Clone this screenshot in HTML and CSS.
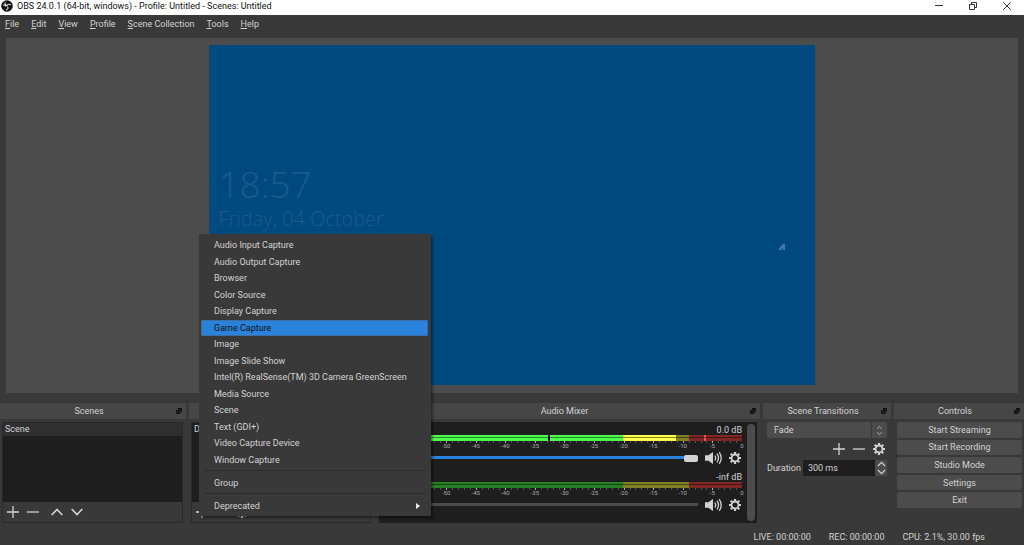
FILE: index.html
```
<!DOCTYPE html>
<html lang="en">
<head>
<meta charset="utf-8">
<title>OBS 24.0.1 (64-bit, windows)</title>
<link rel="stylesheet" href="styles.css">
</head>
<body>
<svg class="defs" aria-hidden="true">
  <symbol id="plus" viewBox="0 0 12 12"><path d="M6 0v12M0 6h12" stroke="currentColor" stroke-width="1.3"/></symbol>
  <symbol id="minus" viewBox="0 0 12 12"><path d="M0 6h12" stroke="currentColor" stroke-width="1.3"/></symbol>
  <symbol id="up" viewBox="0 0 12 12"><path d="M.7 9 6 3.4 11.3 9" fill="none" stroke="currentColor" stroke-width="1.7"/></symbol>
  <symbol id="down" viewBox="0 0 12 12"><path d="M.7 3 6 8.6 11.3 3" fill="none" stroke="currentColor" stroke-width="1.7"/></symbol>
  <symbol id="gear" viewBox="0 0 12 12"><circle cx="6" cy="6" r="3.5" fill="none" stroke="currentColor" stroke-width="1.8"/><path d="M6 0v2M6 10v2M0 6h2M10 6h2M1.75 1.75l1.4 1.4M8.85 8.85l1.4 1.4M1.75 10.25l1.4-1.4M8.85 3.15l1.4-1.4" stroke="currentColor" stroke-width="2.2"/></symbol>
  <symbol id="speaker" viewBox="0 0 17 12"><path d="M0 3.2h3.4L8 0v12L3.4 8.8H0z" fill="currentColor"/><path d="M9.8 3.6q1.8 2.4 0 4.8M12 1.6q3 4.4 0 8.8M14.2 .2q4 5.8 0 11.6" fill="none" stroke="currentColor" stroke-width="1.3"/></symbol>
  <symbol id="float" viewBox="0 0 6 6"><path d="M2 0h4v4H5V2H2z" fill="#111"/><path d="M.5 2.5h3.6v3H.5z" fill="#222" stroke="#111"/></symbol>
</svg>
<div class="window">
  <header class="titlebar">
    <svg class="logo" viewBox="0 0 12 12"><circle cx="6" cy="6" r="5.8" fill="#111"/><path d="M4.2 2.4c-.6 1.9.5 3 2 3M9.8 5c-1.5-1.3-3-.8-3.6.6M5.1 9.9c1.9-.2 2.4-2 1.3-3.4M2 5.2c1.6-.5 2.6.3 2.8 1.4" fill="none" stroke="#ddd" stroke-width="1.1"/></svg>
    <h1 class="title">OBS 24.0.1 (64-bit, windows) - Profile: Untitled - Scenes: Untitled</h1>
    <div class="winbuttons">
      <button aria-label="Minimize"><svg viewBox="0 0 8 8"><path d="M0 3.5h8" stroke="#333"/></svg></button>
      <button aria-label="Restore"><svg viewBox="0 0 8 8"><path d="M.5 2.5h5v5h-5zM2.5 2V.5h5v5H6" fill="none" stroke="#333"/></svg></button>
      <button aria-label="Close"><svg viewBox="0 0 8 8"><path d="M.3.3l7.4 7.4M7.7.3.3 7.7" stroke="#333"/></svg></button>
    </div>
  </header>
  <nav class="menubar">
    <button><u>F</u>ile</button><button><u>E</u>dit</button><button><u>V</u>iew</button><button><u>P</u>rofile</button><button><u>S</u>cene Collection</button><button><u>T</u>ools</button><button><u>H</u>elp</button>
  </nav>
  <main class="preview">
    <div class="canvas">
      <div class="lock"><div class="clock">18:57</div><div class="date">Friday, 04 October</div></div>
      <svg class="cursor" viewBox="0 0 6 6"><path d="M3 0h3v6H4V4H3v2H0V4h1V2h2z" fill="#3f78a6"/></svg>
    </div>
  </main>
  <div class="docks">
    <section class="dock">
      <h2 class="docktitle">Scenes<svg class="float"><use href="#float"/></svg></h2>
      <div class="listbox">
        <ul class="list"><li class="row selected">Scene</li></ul>
        <div class="toolbar">
          <button aria-label="Add scene"><svg><use href="#plus"/></svg></button>
          <button aria-label="Remove scene"><svg><use href="#minus"/></svg></button>
          <span class="divider"></span>
          <button aria-label="Move scene up"><svg><use href="#up"/></svg></button>
          <button aria-label="Move scene down"><svg><use href="#down"/></svg></button>
        </div>
      </div>
    </section>
    <section class="dock">
      <h2 class="docktitle"><svg class="float"><use href="#float"/></svg></h2>
      <div class="listbox">
        <ul class="list"><li class="row">D</li></ul>
        <div class="toolbar">
          <button aria-label="Add source"><svg><use href="#plus"/></svg></button>
          <button aria-label="Remove source"><svg><use href="#minus"/></svg></button>
          <button aria-label="Source properties"><svg><use href="#gear"/></svg></button>
        </div>
      </div>
    </section>
    <section class="dock">
      <h2 class="docktitle">Audio Mixer<svg class="float"><use href="#float"/></svg></h2>
      <div class="mixer">
        <div class="channels">
          <div class="channel">
            <div class="level">0.0 dB</div>
            <div class="meter live"></div>
            <div class="ticks"></div>
            <div class="scale"><span>-60</span><span>-55</span><span>-50</span><span>-45</span><span>-40</span><span>-35</span><span>-30</span><span>-25</span><span>-20</span><span>-15</span><span>-10</span><span>-5</span><span>0</span></div>
            <div class="volume">
              <input class="fader" type="range" min="0" max="100" value="100" aria-label="Desktop audio volume">
              <button aria-label="Mute desktop audio"><svg class="speaker"><use href="#speaker"/></svg></button>
              <button aria-label="Desktop audio settings"><svg><use href="#gear"/></svg></button>
            </div>
          </div>
          <div class="channel">
            <div class="level">-inf dB</div>
            <div class="meter"></div>
            <div class="ticks"></div>
            <div class="scale"><span>-60</span><span>-55</span><span>-50</span><span>-45</span><span>-40</span><span>-35</span><span>-30</span><span>-25</span><span>-20</span><span>-15</span><span>-10</span><span>-5</span><span>0</span></div>
            <div class="volume">
              <input class="fader silent" type="range" min="0" max="100" value="0" aria-label="Microphone volume">
              <button aria-label="Mute microphone"><svg class="speaker"><use href="#speaker"/></svg></button>
              <button aria-label="Microphone settings"><svg><use href="#gear"/></svg></button>
            </div>
          </div>
        </div>
        <div class="scrollbar"></div>
      </div>
    </section>
    <section class="dock">
      <h2 class="docktitle">Scene Transitions<svg class="float"><use href="#float"/></svg></h2>
      <div class="transitions">
        <div class="combo">
          <select aria-label="Transition"><option>Fade</option></select>
          <span class="arrows"><svg><use href="#up"/></svg><svg><use href="#down"/></svg></span>
        </div>
        <div class="tools">
          <button aria-label="Add transition"><svg><use href="#plus"/></svg></button>
          <button aria-label="Remove transition"><svg><use href="#minus"/></svg></button>
          <button aria-label="Transition properties"><svg><use href="#gear"/></svg></button>
        </div>
        <div class="duration">
          <label for="duration">Duration</label>
          <input id="duration" type="text" value="300 ms">
          <div class="spin">
            <button aria-label="Increase"><svg><use href="#up"/></svg></button>
            <button aria-label="Decrease"><svg><use href="#down"/></svg></button>
          </div>
        </div>
      </div>
    </section>
    <section class="dock">
      <h2 class="docktitle">Controls<svg class="float"><use href="#float"/></svg></h2>
      <div class="controls">
        <button>Start Streaming</button>
        <button>Start Recording</button>
        <button>Studio Mode</button>
        <button>Settings</button>
        <button>Exit</button>
      </div>
    </section>
  </div>
  <footer class="status"><span>LIVE: 00:00:00</span><span>REC: 00:00:00</span><span class="cpu">CPU: 2.1%, 30.00 fps</span></footer>
</div>
<div class="popup" role="menu">
  <div class="group">
    <button role="menuitem">Audio Input Capture</button>
    <button role="menuitem">Audio Output Capture</button>
    <button role="menuitem">Browser</button>
    <button role="menuitem">Color Source</button>
    <button role="menuitem">Display Capture</button>
    <button role="menuitem" class="active">Game Capture</button>
    <button role="menuitem">Image</button>
    <button role="menuitem">Image Slide Show</button>
    <button role="menuitem">Intel(R) RealSense(TM) 3D Camera GreenScreen</button>
    <button role="menuitem">Media Source</button>
    <button role="menuitem">Scene</button>
    <button role="menuitem">Text (GDI+)</button>
    <button role="menuitem">Video Capture Device</button>
    <button role="menuitem">Window Capture</button>
  </div>
  <hr>
  <button role="menuitem">Group</button>
  <hr>
  <button role="menuitem">Deprecated<svg class="more" viewBox="0 0 4 6"><path d="M0 0l4 3-4 3z" fill="#eee"/></svg></button>
</div>
</body>
</html>
```
FILE: styles.css
```
* { box-sizing: border-box; }
body {
  margin: 0;
  background: #3a3939;
  color: #d2d2d2;
  font: 9px/12px Roboto, "Open Sans", sans-serif;
}
button, input, select { font: inherit; color: inherit; margin: 0; padding: 0; border: 0; background: none; }
h1, h2, ul { margin: 0; padding: 0; font: inherit; list-style: none; }
svg { display: block; width: 12px; height: 12px; }
.defs { position: absolute; width: 0; height: 0; }
.window { display: flex; flex-direction: column; min-height: 100vh; }

.titlebar { display: flex; align-items: center; height: 15px; padding: 0 13px 3px 1px; background: #fff; color: #111; }
.title { margin-left: 4px; }
.winbuttons { display: flex; gap: 26px; margin-left: auto; }
.winbuttons svg { width: 8px; height: 8px; }

.menubar { display: flex; gap: 12px; height: 23px; padding: 0 5px 6px; align-items: center; }

.preview { flex: 1; display: flex; justify-content: center; margin: 0 6px; padding: 7px 0 8px; background: #4c4c4c; }
.canvas { display: flex; justify-content: space-between; align-items: flex-start; width: calc(60% - 2px); padding: 117px 30px 0 9px; background: #004a80; }
.lock { color: #1c5b8d; font-family: "Open Sans", sans-serif; font-weight: 300; }
.clock { font-size: 37px; line-height: 44px; }
.date { font-size: 20px; line-height: 26px; }
.cursor { width: 6px; height: 6px; margin-top: 82px; }

.docks { display: grid; grid-template-columns: 186fr 185fr 383fr 128fr 130fr; gap: 3px; height: 120px; margin-top: 10px; }
.dock { display: flex; flex-direction: column; min-width: 0; }
.docktitle { position: relative; display: flex; align-items: center; justify-content: center; height: 16px; padding-right: 8px; background: #464646; }
.docktitle .float { position: absolute; right: 4px; top: 5px; width: 6px; height: 6px; }

.listbox { flex: 1; display: flex; flex-direction: column; margin: 3px 3px 0 2px; border: 1px solid #292929; }
.list { flex: 1; background: #1f1e1f; }
.row { height: 13px; padding-left: 2px; }
.row.selected { background: #2f2f2f; }
.toolbar { display: flex; align-items: center; gap: 8px; height: 20px; padding-left: 4px; }
.divider { width: 1px; height: 12px; margin: 0 -3px 0 -2px; background: #333; }

.mixer { flex: 1; display: flex; gap: 5px; margin: 3px 3px 0 2px; padding: 2px 2px 2px 8px; background: #1f1e1f; }
.channels { flex: 1; }
.channel { height: 47px; }
.level { height: 11px; line-height: 12px; text-align: right; }
.meter {
  height: 6px;
  background:
    linear-gradient(transparent 2px, #0007 2px 3px, transparent 3px),
    linear-gradient(90deg, #267f26 66.6%, #7f7f26 66.6% 85%, #7f2626 85%);
}
.meter.live {
  background:
    linear-gradient(transparent 2px, #0007 2px 3px, transparent 3px),
    linear-gradient(90deg, #4cff4c 45.3%, #000 45.3% 45.9%, #4cff4c 45.9% 66.6%, #ffff4c 66.6% 81.5%, #7f7f26 81.5% 85%, #7f2626 85% 89.2%, #ff4c4c 89.2% 89.8%, #7f2626 89.8%);
}
.ticks {
  height: 2px;
  background:
    repeating-linear-gradient(90deg, #aaa 0 1px, transparent 1px calc(100% / 12)),
    repeating-linear-gradient(90deg, #555 0 1px, transparent 1px calc(100% / 60));
}
.scale { display: flex; justify-content: space-between; height: 7px; font-size: 6px; line-height: 6px; color: #aaa; }
.scale span { display: flex; justify-content: center; width: 0; }
.volume { display: flex; align-items: center; gap: 7px; height: 16px; padding-right: 1px; }
.speaker { width: 17px; height: 12px; }
.fader { flex: 1; min-width: 0; height: 8px; appearance: none; background: linear-gradient(transparent 2px, #2a82da 2px 5px, transparent 5px); }
.fader.silent { background: linear-gradient(transparent 2px, #4c4c4c 2px 5px, transparent 5px); }
.fader::-webkit-slider-thumb { appearance: none; width: 14px; height: 7px; border-radius: 2px; background: #d2d2d2; }
.fader.silent::-webkit-slider-thumb { background: #4c4c4c; }
.scrollbar { width: 8px; border-radius: 4px; background: #4c4c4c; }

.transitions { display: flex; flex-direction: column; margin: 3px 4px 0 4px; }
.combo { display: flex; height: 16px; }
.combo select { flex: 1; padding-left: 7px; appearance: none; background: #4c4c4c; border-radius: 2px 0 0 2px; }
.arrows { display: flex; flex-direction: column; align-items: center; justify-content: center; gap: 1px; width: 16px; border-left: 1px solid #3a3939; border-radius: 0 2px 2px 0; background: #4c4c4c; }
.arrows svg { width: 5px; height: 5px; }
.tools { display: flex; align-items: center; justify-content: flex-end; gap: 8px; height: 22px; padding-right: 2px; }
.duration { display: flex; align-items: center; gap: 2px; height: 16px; }
.duration input { flex: 1; min-width: 0; height: 16px; padding-left: 5px; border-radius: 2px 0 0 2px; background: #1f1e1f; }
.spin { display: flex; flex-direction: column; width: 12px; height: 16px; margin-left: -2px; border-radius: 2px; background: #4c4c4c; }
.spin button { flex: 1; display: flex; align-items: center; justify-content: center; }
.spin svg { width: 9px; height: 8px; }

.controls { display: grid; grid-auto-rows: 1fr; gap: 2px; height: 86px; margin: 3px 2px 0 3px; }
.controls button { border-radius: 2px; background: #4c4c4c; line-height: 14px; }

.status { display: flex; align-items: center; gap: 18px; justify-content: flex-end; height: 22px; padding: 6px 39px 0 0; }

.popup { position: absolute; left: 199px; top: 234px; width: 232px; padding: 3px 3px 2px 2px; background: #3a3939; box-shadow: 2px 2px 2px #0006; }
.popup .group { display: flex; flex-direction: column; height: 231px; }
.popup button { display: flex; align-items: center; justify-content: space-between; width: 100%; height: 17px; padding: 0 7px 0 12px; text-align: left; border: 1px solid transparent; white-space: nowrap; }
.popup .group button { flex: 1; height: auto; min-height: 0; }
.popup .active { background: #2a82da; border-color: #3a6ea5; color: #111; }
.popup hr { height: 1px; margin: 2px 3px 3px; border: 0; background: #2c2c2c; }
.more { width: 4px; height: 6px; }
```
